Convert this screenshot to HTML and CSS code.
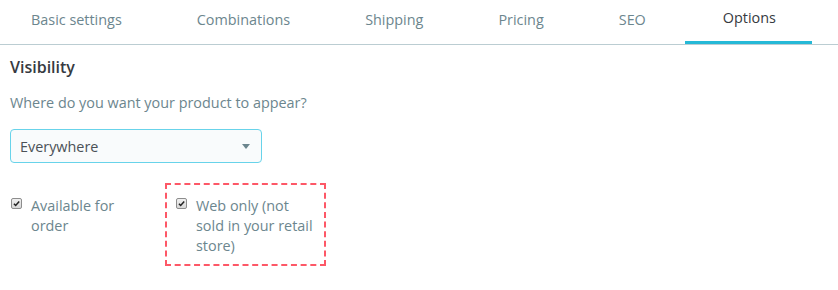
FILE: index.html
```html
<!DOCTYPE html>
<html>
<head>
<meta charset="utf-8">
<link rel="stylesheet" href="styles.css">
</head>
<body>
<nav class="tabs">
  <div class="tab">Basic settings</div>
  <div class="tab">Combinations</div>
  <div class="tab">Shipping</div>
  <div class="tab">Pricing</div>
  <div class="tab">SEO</div>
  <div class="tab active">Options</div>
</nav>
<main class="content">
  <h2 class="heading">Visibility</h2>
  <p class="question">Where do you want your product to appear?</p>
  <div class="select">
    <span class="select-value">Everywhere</span>
    <span class="caret"></span>
  </div>
  <div class="checks">
    <div class="check-col">
      <span class="checkbox"><svg viewBox="0 0 12 12" width="12" height="12"><path d="M2.6 6.2 L4.9 8.6 L9.6 3.2" fill="none" stroke="#222" stroke-width="2"/></svg></span>
      <span class="check-label first">Available for order</span>
    </div>
    <div class="check-col highlighted">
      <span class="checkbox"><svg viewBox="0 0 12 12" width="12" height="12"><path d="M2.6 6.2 L4.9 8.6 L9.6 3.2" fill="none" stroke="#222" stroke-width="2"/></svg></span>
      <span class="check-label second">Web only (not sold in your retail store)</span>
    </div>
  </div>
</main>
</body>
</html>
```
FILE: styles.css
```css
* { box-sizing: border-box; }
html, body { margin: 0; padding: 0; background: #fff; }
body {
  font-family: "Open Sans", "Liberation Sans", sans-serif;
  font-size: 14.4px;
  color: #6c868e;
  width: 838px;
  height: 290px;
  overflow: hidden;
}
.tabs {
  display: flex;
  gap: 2px;
  height: 45px;
  border-bottom: 1px solid #bbcdd2;
  margin-left: -6px;
}
.tab {
  height: 44px;
  padding: 10px 36px 0 37px;
  line-height: 19px;
  white-space: nowrap;
  color: #6c868e;
}
.tab.active {
  color: #363a41;
  padding: 8px 36px 0 38px;
  margin-left: 1px;
  border-bottom: 3px solid #25b9d7;
}
.content { padding: 0 10px; }
.heading {
  margin: 11px 0 0;
  font-size: 16px;
  line-height: 22px;
  font-weight: 600;
  color: #363a41;
}
.question {
  margin: 15px 0 0;
  line-height: 20px;
}
.select {
  margin-top: 16px;
  width: 252px;
  height: 34px;
  border: 1px solid #68d3ea;
  border-radius: 4px;
  background: #f9fbfc;
  display: flex;
  align-items: center;
  justify-content: space-between;
  padding: 0 11px 0 9px;
  color: #4b5157;
}
.caret {
  width: 0; height: 0;
  border-left: 4.5px solid transparent;
  border-right: 4.5px solid transparent;
  border-top: 5px solid #6c868e;
}
.checks {
  display: flex;
  gap: 20px;
  margin-top: 20px;
}
.check-col {
  display: flex;
  align-items: flex-start;
  line-height: 20px;
}
.check-col:first-child {
  width: 135px;
  padding-top: 13px;
  padding-left: 1px;
}
.highlighted {
  border: 2px dashed #fd5867;
  padding: 11px 6px 8px 9px;
}
.checkbox {
  flex: none;
  width: 11px;
  height: 11px;
  margin-top: 2px;
  margin-right: 9px;
  border: 1px solid #8d8d8d;
  border-radius: 2px;
  background: linear-gradient(#f0f0f0, #d8d8d8);
  display: flex;
  align-items: center;
  justify-content: center;
}
.checkbox svg { width: 9px; height: 9px; }
.check-label.first { width: 110px; }
.check-label.second { width: 122px; }
```
